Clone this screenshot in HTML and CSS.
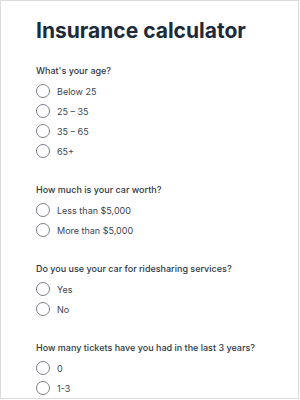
FILE: index.html
```html
<!DOCTYPE html>
<html lang="en">
<head>
  <meta charset="UTF-8">
  <title>Insurance calculator</title>
  <link rel="stylesheet" href="styles.css">
</head>
<body>
  <div class="frame">
    <h1>Insurance calculator</h1>

    <fieldset class="grupo">
      <legend>What's your age?</legend>
      <label class="opcao"><input type="radio" name="age"><span>Below 25</span></label>
      <label class="opcao"><input type="radio" name="age"><span>25 – 35</span></label>
      <label class="opcao"><input type="radio" name="age"><span>35 – 65</span></label>
      <label class="opcao"><input type="radio" name="age"><span>65+</span></label>
    </fieldset>

    <fieldset class="grupo">
      <legend>How much is your car worth?</legend>
      <label class="opcao"><input type="radio" name="worth"><span>Less than $5,000</span></label>
      <label class="opcao"><input type="radio" name="worth"><span>More than $5,000</span></label>
    </fieldset>

    <fieldset class="grupo">
      <legend>Do you use your car for ridesharing services?</legend>
      <label class="opcao"><input type="radio" name="ride"><span>Yes</span></label>
      <label class="opcao"><input type="radio" name="ride"><span>No</span></label>
    </fieldset>

    <fieldset class="grupo">
      <legend>How many tickets have you had in the last 3 years?</legend>
      <label class="opcao"><input type="radio" name="tickets"><span>0</span></label>
      <label class="opcao"><input type="radio" name="tickets"><span>1-3</span></label>
    </fieldset>
  </div>
</body>
</html>
```

FILE: styles.css
```css
* {
  box-sizing: border-box;
  margin: 0;
  padding: 0;
}

body {
  background: #fff;
  font-family: Inter, "Liberation Sans", sans-serif;
  width: 300px;
  height: 400px;
  overflow: hidden;
}

.frame {
  width: 299px;
  height: 399px;
  border: 1px solid #dcdcdc;
  padding: 17px 0 0 35px;
  overflow: hidden;
}

h1 {
  font-size: 21px;
  font-weight: 700;
  color: #1c2a3b;
  line-height: 25px;
  margin-bottom: 18px;
}

.grupo {
  border: none;
  display: flex;
  flex-direction: column;
  margin-bottom: 19px;
}

.grupo legend {
  font-size: 9px;
  font-weight: 500;
  color: #2f3744;
  line-height: 20px;
}

.opcao {
  display: flex;
  align-items: center;
  gap: 7px;
  height: 20px;
  font-size: 9px;
  color: #3d4451;
}

.opcao input {
  appearance: none;
  width: 14px;
  height: 14px;
  border: 1px solid #7a7f88;
  border-radius: 50%;
  background: #fff;
}
```
